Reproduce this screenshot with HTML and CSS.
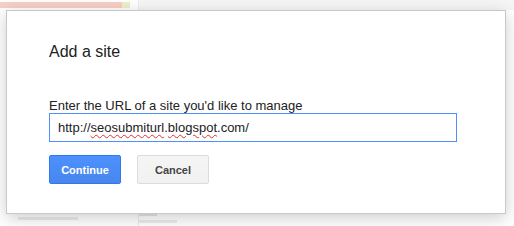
FILE: index.html
```html
<!DOCTYPE html>
<html lang="en">
<head>
    <meta charset="UTF-8">
    <title>Add a site</title>
    <link rel="stylesheet" href="styles.css">
</head>
<body>
    <div class="page">
        <div class="side">
            <div class="topbar">
                <span class="topbar-fill"></span>
                <span class="topbar-flag"></span>
            </div>
            <div class="side-foot">
                <span class="blur-line wide"></span>
            </div>
        </div>
        <div class="main">
            <div class="main-head"></div>
            <div class="main-foot">
                <span class="blur-line short"></span>
                <span class="blur-line mid"></span>
            </div>
        </div>
    </div>

    <div class="dialog">
        <h1 class="dialog-title">Add a site</h1>
        <label class="dialog-label" for="siteUrl">Enter the URL of a site you'd like to manage</label>
        <div class="url-box" id="siteUrl">http://<span class="misspelt">seosubmiturl</span>.<span class="misspelt">blogspot</span>.com/</div>
        <div class="dialog-buttons">
            <button class="btn btn-primary">Continue</button>
            <button class="btn btn-plain">Cancel</button>
        </div>
    </div>
</body>
</html>
```

FILE: styles.css
```css
* {
    margin: 0;
    padding: 0;
    box-sizing: border-box;
}

body {
    background: #fff;
    font-family: Arial, "Liberation Sans", sans-serif;
    color: #222;
    width: 514px;
    height: 226px;
    overflow: hidden;
    position: relative;
}

/* faded page behind the dialog */
.page {
    display: flex;
    height: 226px;
}

.side {
    width: 139px;
    border-right: 1px solid #eee;
    display: flex;
    flex-direction: column;
    justify-content: space-between;
}

.topbar {
    display: flex;
    margin-top: 2px;
    height: 6px;
}

.topbar-fill {
    width: 122px;
    background: #f6cfc6;
}

.topbar-flag {
    width: 8px;
    background: #eef0c8;
}

.side-foot {
    padding: 0 0 6px 18px;
}

.main {
    flex: 1;
    display: flex;
    flex-direction: column;
    justify-content: space-between;
}

.main-head {
    height: 10px;
    background: #f6f6f6;
}

.main-foot {
    display: flex;
    flex-direction: column;
    gap: 4px;
    padding: 0 0 3px 0;
}

.blur-line {
    display: block;
    height: 3px;
    background: #ececec;
}

.blur-line.wide {
    width: 60px;
}

.blur-line.short {
    width: 18px;
    height: 4px;
    background: #e6e6e6;
}

.blur-line.mid {
    width: 38px;
}

/* dialog */
.dialog {
    position: absolute;
    left: 6px;
    top: 10px;
    width: 500px;
    height: 204px;
    background: #fff;
    border: 1px solid #c8c8c8;
    box-shadow: 0 4px 16px rgba(0,0,0,0.2);
    padding: 32px 42px 0;
}

.dialog-title {
    font-size: 16px;
    font-weight: normal;
    line-height: 18px;
    color: #222;
}

.dialog-label {
    display: block;
    margin-top: 37px;
    font-size: 13px;
    line-height: 15px;
}

.url-box {
    width: 408px;
    height: 29px;
    border: 1px solid #4d90fe;
    padding: 0 8px;
    font-size: 13px;
    line-height: 27px;
    color: #222;
    white-space: nowrap;
}

.misspelt {
    text-decoration: underline wavy #e03030;
    text-decoration-thickness: 1px;
    text-underline-offset: 2px;
}

.dialog-buttons {
    display: flex;
    gap: 16px;
    margin-top: 13px;
}

.btn {
    width: 72px;
    height: 29px;
    border-radius: 2px;
    font-family: Arial, "Liberation Sans", sans-serif;
    font-size: 11px;
    font-weight: bold;
}

.btn-primary {
    background: linear-gradient(#4d90fe, #4787ed);
    border: 1px solid #3079ed;
    color: #fff;
}

.btn-plain {
    background: linear-gradient(#f5f5f5, #f1f1f1);
    border: 1px solid #dcdcdc;
    color: #444;
}
```
